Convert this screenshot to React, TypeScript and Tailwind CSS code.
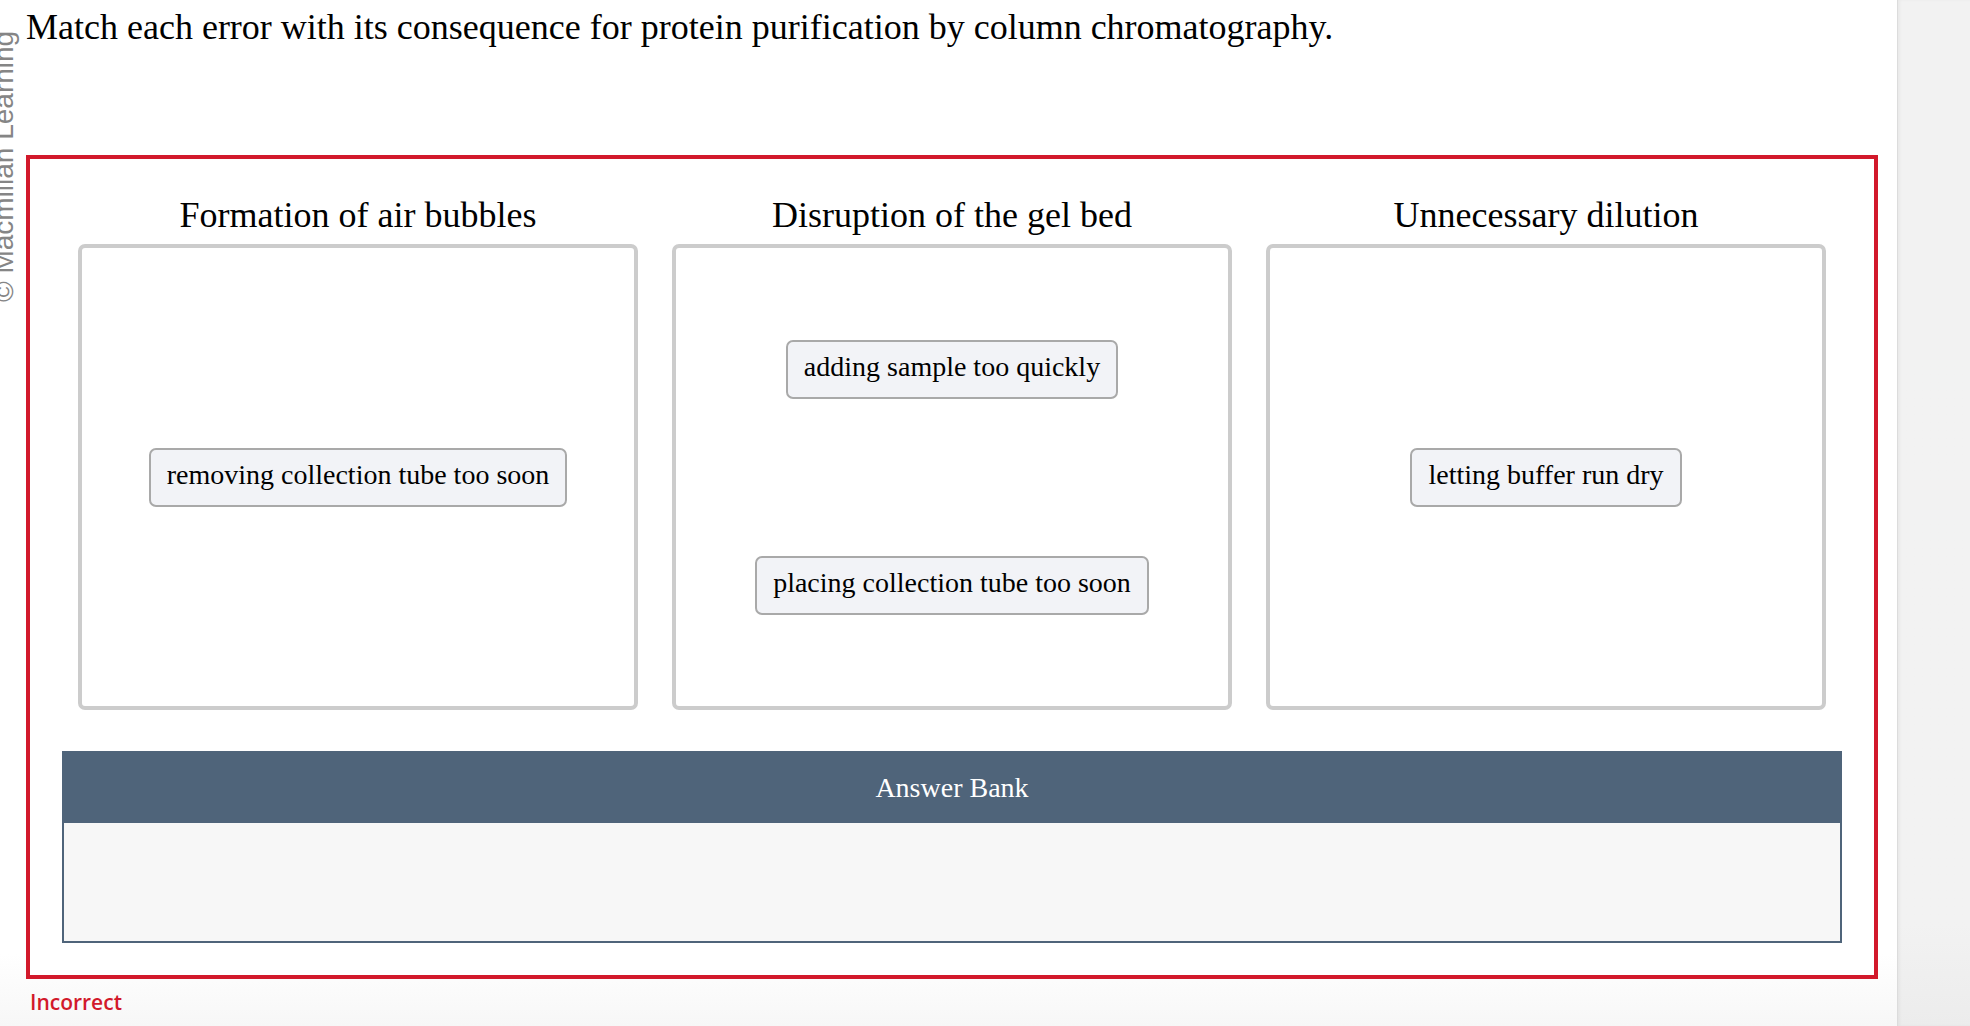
import React from "react";

const serif = "font-['Liberation_Serif','Times_New_Roman',serif]";

function Card({ children }: { children: React.ReactNode }) {
  return (
    <div className="whitespace-nowrap rounded-[7px] border-2 border-[#a9a9a9] bg-[#f2f3f7] px-[16px] pb-[14px] pt-[8px] text-[28px] leading-[33px] text-black">
      {children}
    </div>
  );
}

function Column({ title, items }: { title: string; items: string[] }) {
  return (
    <div className="flex flex-col">
      <h2 className="mb-[8px] text-center text-[36px] font-normal leading-[41px] text-black">{title}</h2>
      <div className="flex h-[466px] flex-col items-center justify-center gap-[157px] rounded-[7px] border-4 border-[#cccccc] bg-white">
        {items.map((t) => (
          <Card key={t}>{t}</Card>
        ))}
      </div>
    </div>
  );
}

export default function App() {
  return (
    <div className={`flex h-[1026px] w-[1970px] overflow-hidden bg-white ${serif}`}>
      <main className="relative flex-1 bg-linear-to-b from-white from-[93%] to-[#f7f7f7] pl-[26px] pr-[19px] pt-[7px]">
        <div className="pointer-events-none absolute left-[-10px] top-[302px] origin-top-left -rotate-90 whitespace-nowrap font-['Liberation_Sans',Arial,sans-serif] text-[28px] leading-[28px] text-[#858585]">
          © Macmillan Learning
        </div>
        <h1 className="whitespace-nowrap text-[36px] font-normal leading-[41px] text-black">
          Match each error with its consequence for protein purification by column chromatography.
        </h1>
        <section className="mt-[107px] border-4 border-[#d2192b] bg-white px-[32px] pb-[32px] pt-[36px]">
          <div className="grid grid-cols-3 gap-[34px] px-[16px]">
            <Column title="Formation of air bubbles" items={["removing collection tube too soon"]} />
            <Column
              title="Disruption of the gel bed"
              items={["adding sample too quickly", "placing collection tube too soon"]}
            />
            <Column title="Unnecessary dilution" items={["letting buffer run dry"]} />
          </div>
          <div className="mt-[41px]">
            <div className="flex h-[72px] items-center justify-center bg-[#4f647a] text-[28px] leading-[33px] text-white">
              Answer Bank
            </div>
            <div className="h-[120px] border-2 border-t-0 border-[#4f647a] bg-[#f7f7f7]" />
          </div>
        </section>
        <div className="mt-[9px] pl-[4px] font-['Open_Sans',sans-serif] text-[21px] font-semibold leading-[28px] text-[#d2192b]">
          Incorrect
        </div>
      </main>
      <aside className="w-[73px] border-l border-[#dcdcdc] bg-linear-to-b from-[#f2f2f2] from-[90%] to-[#ececec] shadow-[inset_2px_0_3px_rgba(0,0,0,0.04)]" />
    </div>
  );
}
